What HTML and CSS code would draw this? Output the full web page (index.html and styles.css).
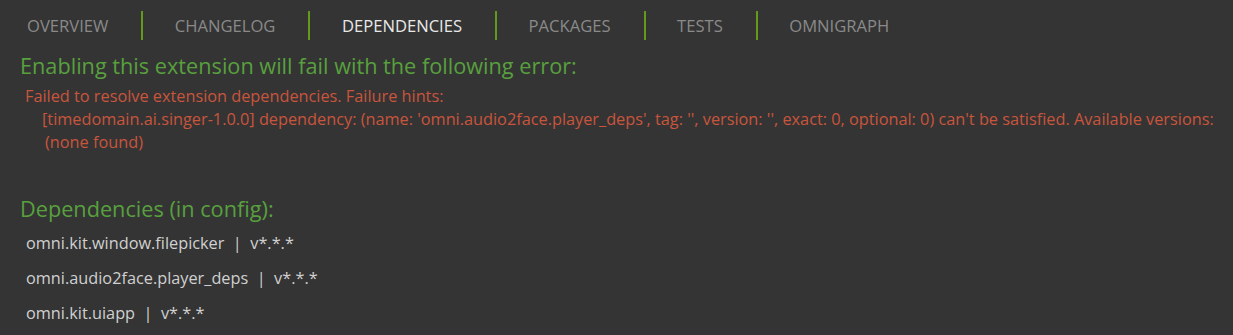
FILE: index.html
```html
<!DOCTYPE html>
<html>
<head>
<meta charset="utf-8">
<link rel="stylesheet" href="styles.css">
</head>
<body>
<div class="page">
  <nav class="tabs">
    <div class="tab">OVERVIEW</div>
    <div class="sep"></div>
    <div class="tab">CHANGELOG</div>
    <div class="sep"></div>
    <div class="tab active">DEPENDENCIES</div>
    <div class="sep"></div>
    <div class="tab">PACKAGES</div>
    <div class="sep"></div>
    <div class="tab">TESTS</div>
    <div class="sep"></div>
    <div class="tab">OMNIGRAPH</div>
  </nav>
  <h2 class="title">Enabling this extension will fail with the following error:</h2>
  <div class="error">
    <div class="err-line">Failed to resolve extension dependencies. Failure hints:</div>
    <div class="err-line ind1">[timedomain.ai.singer-1.0.0] dependency: (name: 'omni.audio2face.player_deps', tag: '', version: '', exact: 0, optional: 0) can't be satisfied. Available versions:</div>
    <div class="err-line ind2">(none found)</div>
  </div>
  <h2 class="title deps-title">Dependencies (in config):</h2>
  <ul class="deps">
    <li>omni.kit.window.filepicker&nbsp; | &nbsp;v*.*.*</li>
    <li>omni.audio2face.player_deps&nbsp; | &nbsp;v*.*.*</li>
    <li>omni.kit.uiapp&nbsp; | &nbsp;v*.*.*</li>
  </ul>
</div>
</body>
</html>
```
FILE: styles.css
```css
html, body {
  margin: 0;
  padding: 0;
  background: #343434;
}
body {
  font-family: "Open Sans", "Noto Sans", sans-serif;
  width: 1233px;
  height: 335px;
  overflow: hidden;
}
.page {
  padding: 0 0 0 20px;
}
.tabs {
  display: flex;
  align-items: center;
  height: 51px;
  margin-left: -20px;
  padding-left: 27px;
}
.tab {
  font-size: 16.6px;
  color: #8a8a8a;
  padding: 0 33px 0 31.5px;
  line-height: 20px;
}
.tab:first-child {
  padding-left: 0;
}
.tab.active {
  color: #e8e8e8;
}
.sep {
  width: 2px;
  height: 29px;
  background: #649a1c;
}
.title {
  margin: 0;
  font-weight: 400;
  font-size: 21.7px;
  line-height: 30px;
  color: #58a03e;
}
.error {
  margin-top: 4px;
  padding-left: 5px;
  color: #c9553d;
  font-size: 16.3px;
  line-height: 23px;
}
.ind1 { padding-left: 17px; }
.ind2 { padding-left: 20px; }
.deps-title {
  margin-top: 40px;
}
.deps {
  list-style: none;
  margin: 8px 0 0;
  padding: 0 0 0 6px;
  color: #d0d0d0;
  font-size: 16.3px;
}
.deps li {
  line-height: 22px;
  margin-bottom: 13px;
}
```
